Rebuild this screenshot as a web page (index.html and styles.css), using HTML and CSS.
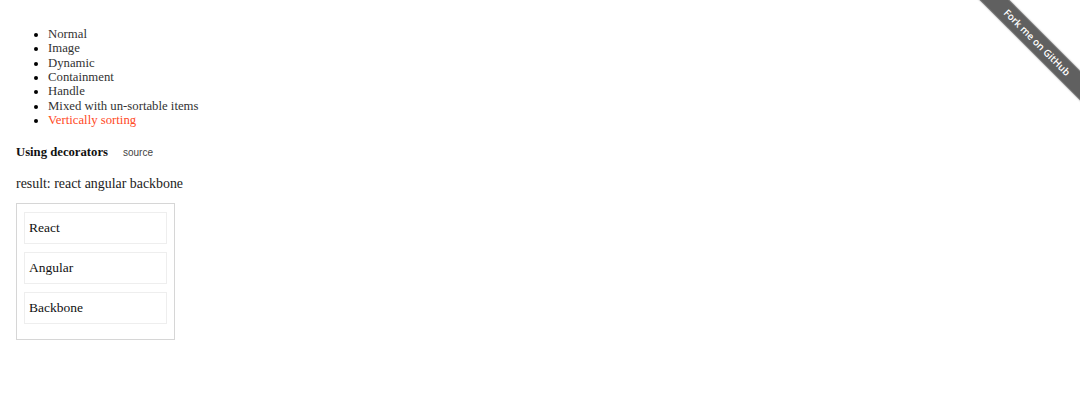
FILE: index.html
```html
<!DOCTYPE html>
<html>
<head>
<meta charset="utf-8">
<link rel="stylesheet" href="styles.css">
</head>
<body>
<ul class="nav">
  <li>Normal</li>
  <li>Image</li>
  <li>Dynamic</li>
  <li>Containment</li>
  <li>Handle</li>
  <li>Mixed with un-sortable items</li>
  <li class="active">Vertically sorting</li>
</ul>
<div class="heading"><b>Using decorators</b><span class="source">source</span></div>
<p class="result">result: react angular backbone</p>
<div class="sortable">
  <div class="item">React</div>
  <div class="item">Angular</div>
  <div class="item">Backbone</div>
</div>
<div class="ribbon-wrap"><div class="ribbon">Fork me on GitHub</div></div>
</body>
</html>
```
FILE: styles.css
```css
html, body { background: #fff; }
body {
  margin: 0;
  padding: 8px 16px;
  font-family: "Liberation Serif", "Times New Roman", serif;
  font-size: 13px;
  color: #222;
}
.nav {
  margin: 19px 0 0 0;
  padding-left: 32px;
  line-height: 14.33px;
  font-size: 12.75px;
}
.nav li { color: #333; }
.nav li::marker { color: #000; }
.nav li.active { color: #ff4a26; }
.heading {
  margin-top: 18px;
  line-height: 14px;
  display: flex;
  align-items: baseline;
  font-size: 12.7px;
}
.heading b { color: #111; }
.source {
  margin-left: 15px;
  font-family: "Liberation Sans", Arial, sans-serif;
  font-size: 10px;
  color: #444;
}
.result {
  margin: 17px 0 0 0;
  line-height: 14px;
  font-size: 13.9px;
}
.sortable {
  margin-top: 12px;
  width: 143px;
  border: 1px solid #d6d6d6;
  padding: 8px 7px 7px 7px;
}
.item {
  height: 30px;
  line-height: 30px;
  padding: 0 4px;
  border: 1px solid #eee;
  margin-bottom: 8px;
  color: #111;
  font-size: 13.5px;
}
.ribbon-wrap {
  position: absolute;
  top: 0;
  right: 0;
  width: 120px;
  height: 120px;
  overflow: hidden;
}
.ribbon {
  position: absolute;
  left: -8px;
  top: 32px;
  width: 170px;
  height: 21px;
  line-height: 21px;
  background: #606060;
  color: #fff;
  text-align: center;
  font-family: "Open Sans", "DejaVu Sans", sans-serif;
  font-weight: 600;
  font-size: 9.8px;
  transform: rotate(45deg);
  box-shadow: 0 0 2px rgba(0,0,0,0.4), inset 0 1px 0 rgba(255,255,255,0.12), inset 0 -1px 0 rgba(255,255,255,0.12);
}
```
